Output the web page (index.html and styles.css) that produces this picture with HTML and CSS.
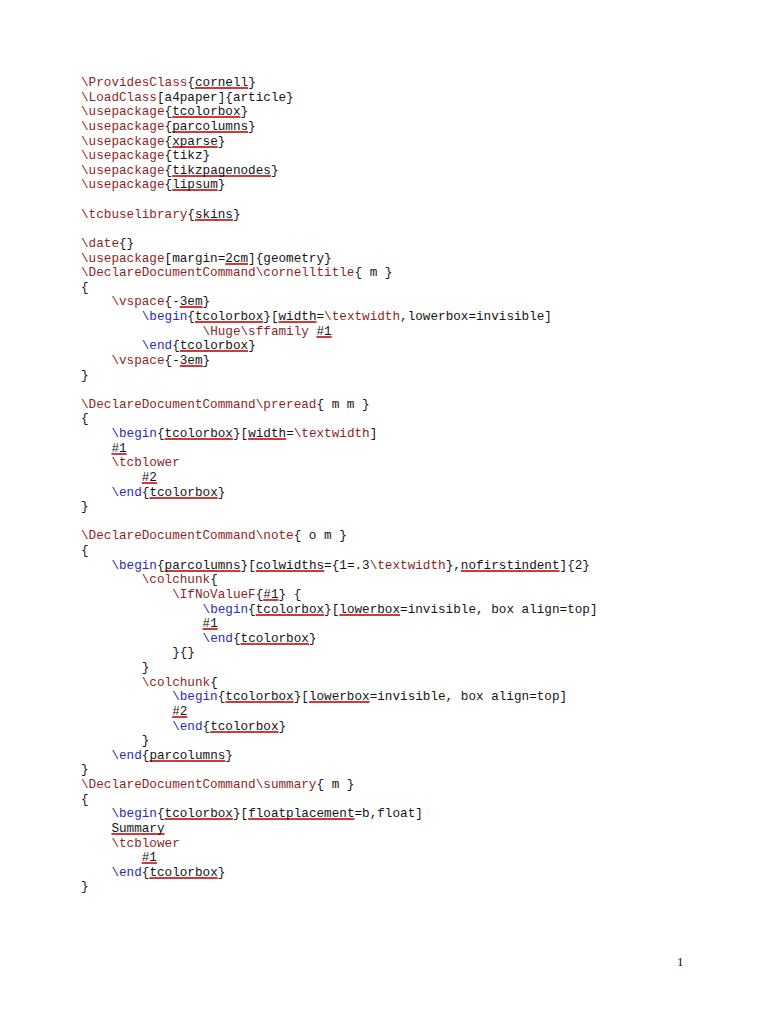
FILE: index.html
```html
<!DOCTYPE html>
<html>
<head>
<meta charset="utf-8">
<link rel="stylesheet" href="styles.css">
</head>
<body>
<div class="page">
<pre class="code"><span class="c">\ProvidesClass</span>{<span class="u">cornell</span>}
<span class="c">\LoadClass</span>[a4paper]{article}
<span class="c">\usepackage</span>{<span class="u">tcolorbox</span>}
<span class="c">\usepackage</span>{<span class="u">parcolumns</span>}
<span class="c">\usepackage</span>{<span class="u">xparse</span>}
<span class="c">\usepackage</span>{tikz}
<span class="c">\usepackage</span>{<span class="u">tikzpagenodes</span>}
<span class="c">\usepackage</span>{<span class="u">lipsum</span>}

<span class="c">\tcbuselibrary</span>{<span class="u">skins</span>}

<span class="c">\date</span>{}
<span class="c">\usepackage</span>[margin=<span class="u">2cm</span>]{geometry}
<span class="c">\DeclareDocumentCommand</span><span class="c">\cornelltitle</span>{ m }
{
    <span class="c">\vspace</span>{-<span class="u">3em</span>}
        <span class="k">\begin</span>{<span class="u">tcolorbox</span>}[<span class="u">width</span>=<span class="c">\textwidth</span>,lowerbox=invisible]
                <span class="c">\Huge</span><span class="c">\sffamily</span> <span class="u">#1</span>
        <span class="k">\end</span>{<span class="u">tcolorbox</span>}
    <span class="c">\vspace</span>{-<span class="u">3em</span>}
}

<span class="c">\DeclareDocumentCommand</span><span class="c">\preread</span>{ m m }
{
    <span class="k">\begin</span>{<span class="u">tcolorbox</span>}[<span class="u">width</span>=<span class="c">\textwidth</span>]
    <span class="u">#1</span>
    <span class="c">\tcblower</span>
        <span class="u">#2</span>
    <span class="k">\end</span>{<span class="u">tcolorbox</span>}
}

<span class="c">\DeclareDocumentCommand</span><span class="c">\note</span>{ o m }
{
    <span class="k">\begin</span>{<span class="u">parcolumns</span>}[<span class="u">colwidths</span>={1=.3<span class="c">\textwidth</span>},<span class="u">nofirstindent</span>]{2}
        <span class="c">\colchunk</span>{
            <span class="c">\IfNoValueF</span>{<span class="u">#1</span>} {
                <span class="k">\begin</span>{<span class="u">tcolorbox</span>}[<span class="u">lowerbox</span>=invisible, box align=top]
                <span class="u">#1</span>
                <span class="k">\end</span>{<span class="u">tcolorbox</span>}
            }{}
        }
        <span class="c">\colchunk</span>{
            <span class="k">\begin</span>{<span class="u">tcolorbox</span>}[<span class="u">lowerbox</span>=invisible, box align=top]
            <span class="u">#2</span>
            <span class="k">\end</span>{<span class="u">tcolorbox</span>}
        }
    <span class="k">\end</span>{<span class="u">parcolumns</span>}
}
<span class="c">\DeclareDocumentCommand</span><span class="c">\summary</span>{ m }
{
    <span class="k">\begin</span>{<span class="u">tcolorbox</span>}[<span class="u">floatplacement</span>=b,float]
    <span class="u">Summary</span>
    <span class="c">\tcblower</span>
        <span class="u">#1</span>
    <span class="k">\end</span>{<span class="u">tcolorbox</span>}
}</pre>
<div class="footer">1</div>
</div>
</body>
</html>
```

FILE: styles.css
```css
html, body {
  margin: 0;
  padding: 0;
  background: #ffffff;
}

.page {
  width: 768px;
  height: 1024px;
  box-sizing: border-box;
  padding: 76px 0 0 81px;
  display: flex;
  flex-direction: column;
}

.code {
  margin: 0;
  font-family: "Liberation Mono", "Courier New", monospace;
  font-size: 12.67px;
  line-height: 14.62px;
  color: #141414;
  white-space: pre;
}

.c {
  color: #8e1f1f;
}

.k {
  color: #2a2ab8;
}

.u {
  text-decoration: underline;
  text-decoration-color: #d23a3a;
  text-decoration-thickness: 1.5px;
  text-underline-offset: 1px;
  text-decoration-skip-ink: none;
}

.footer {
  margin-top: 60px;
  padding-left: 596px;
  font-family: "Liberation Serif", "Times New Roman", serif;
  font-size: 13px;
  line-height: 14px;
  color: #111111;
}
```
